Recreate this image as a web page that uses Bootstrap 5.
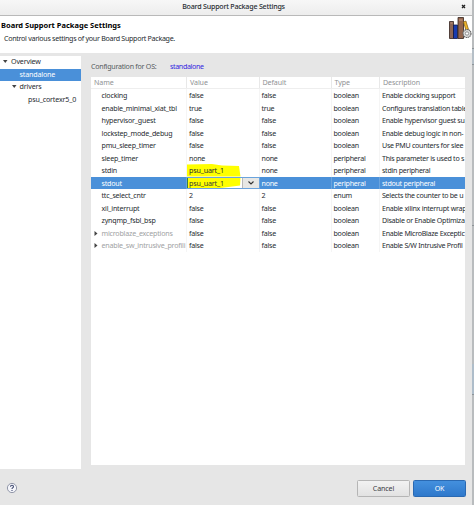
<!DOCTYPE html>
<html lang="en">
<head>
<meta charset="utf-8">
<meta name="viewport" content="width=device-width, initial-scale=1">
<title>Board Support Package Settings</title>
<link href="https://cdn.jsdelivr.net/npm/bootstrap@5.3.0/dist/css/bootstrap.min.css" rel="stylesheet">
<style>
body{width:474px;height:505px;background:linear-gradient(#b9bcbe 0 48px,#8e9498 48px 49px,#b5bfc7 49px 64px,#8e9498 64px 65px,#b9bcbe 65px 225px,#8e9498 225px 226px,#b9bcbe 226px 364px,#aebdca 364px 394px,#8e9498 394px 395px,#b9bcbe 395px);font:7.1px/13px "Noto Sans","Open Sans",sans-serif;color:#262b30;letter-spacing:-.25px}
.dialog-window{width:472px;height:505px;background:#e6e6e6}
.title-strip{height:15.5px;background:linear-gradient(#f7f7f7,#ededed);border-bottom:1px solid #b9b9b9;font-size:7.1px;font-weight:500;line-height:13px;letter-spacing:-.21px}
.title-text{padding-right:5px}
.close-icon{right:6px;top:4px}
.intro{height:37.5px;background:#fff}
.intro h1{font:700 7.5px/10px "Noto Sans",sans-serif;color:#000;padding:4px 0 0 1px;letter-spacing:0}
.intro p{padding:3px 0 0 4px;line-height:10px;letter-spacing:-.29px}
.book-icon{right:0;top:0}
.content-area{height:416px;padding-top:3px}
.sidebar-tree{width:81px;height:413px;background:#fff}
.tree-row{height:12.5px;line-height:11px;white-space:nowrap;letter-spacing:-.15px}
.tree-row svg{margin-right:3px}
.lvl-1{padding-left:3px}.lvl-2{padding-left:11.5px}.leaf-1{padding-left:19.5px}.leaf-2{padding-left:28px}
.picked,.set-row.picked{background:#4a90d9;color:#fff}
.main-pane{margin-left:10px;width:374px}
.os-line{height:21px;line-height:21.5px;color:#555b60}
.os-line a{color:#3326e0;text-decoration:none;margin-left:13.5px;letter-spacing:-.35px}
.settings-box{height:387.5px;background:#fff;overflow:hidden}
.set-row{display:grid;grid-template-columns:96px 72.5px 72px 48.5px 85px;height:12.5px;white-space:nowrap}
.set-row>div{overflow:hidden;border-right:1px solid #f5f5f5;padding-left:2px}
.set-row>div:first-child{padding-left:10.5px;letter-spacing:-.2px}
.set-row>div:last-child{border-right:0;letter-spacing:-.28px}
.set-row.heads{color:#8f9294;height:12px;border-bottom:1px solid #eee;line-height:11px;letter-spacing:-.1px}
.set-row.heads>div{padding-left:3px;border-color:#e8e8e8}
.set-row.heads>div:first-child,.set-row.heads>div:last-child{letter-spacing:-.1px}
.set-row.heads>div:first-child{padding-left:3px}
.set-row.picked>div{border-color:#6aa3dd}
.set-row.muted>div:first-child{color:#a0a2a3;padding-left:3px}
.muted svg{margin-right:3.5px;vertical-align:0}
.marker{background:#ff0;width:53.5px;height:12.5px;display:block;margin-left:-2px;padding-left:2px;letter-spacing:-.15px}
.top-mark{clip-path:polygon(0 .5px,25px 0,35px 1.5px,52px 2px,53.5px 12.5px,0 12.5px)}
.set-row .editor{padding:0;background:#fff;color:#30353a;display:flex;border:1px solid #4a90d9;border-left:0;line-height:11.5px}
.editor .marker{margin:0;height:11px;border-left:1px solid #388044;padding-left:1px;clip-path:polygon(0 0,53.5px 0,53px 8px,30px 11px,0 11px)}
.combo-btn{width:17px;margin-left:auto;background:#e7e7e4;border-left:1px solid #b8b8b8}
.bottom-bar{height:36px;padding:0 6px}
.dlg-btn{width:53px;height:17px;padding:0;font-size:7.1px;line-height:15px;letter-spacing:-.1px;border-radius:1.5px;border:1px solid #b5b5b5;background:linear-gradient(#f2f2f2,#e2e2e2);color:#3b4045}
.dlg-btn.ok{background:linear-gradient(#4490de,#2e78cb);border-color:#2a69b2;color:#fff}
.bottom-btns{gap:3px;margin-top:11px}
.help-icon{margin-top:13px}
</style>
<script src="https://cdn.jsdelivr.net/npm/bootstrap@5.3.0/dist/js/bootstrap.bundle.min.js"></script>
</head>
<body class="overflow-hidden m-0">
<main class="dialog-window d-flex flex-column">
<header class="title-strip position-relative text-center flex-shrink-0"><span class="title-text">Board Support Package Settings</span>
<svg class="close-icon position-absolute" width="5" height="5" viewBox="0 0 5 5"><path d="M1 1 4 4M4 1 1 4" stroke="#222" stroke-width="1.3"/></svg></header>
<section class="intro position-relative flex-shrink-0">
<h1 class="m-0">Board Support Package Settings</h1><p class="m-0">Control various settings of your Board Support Package.</p>
<svg class="book-icon position-absolute" width="24" height="24" viewBox="0 0 24 24"><g stroke="#33231e" stroke-width=".8"><path d="M1.5 5.5h4v17h-4z" fill="#8b6555"/><path d="M5.5 9h4v13.5h-4z" fill="#173bb0" stroke="#101746"/><path d="M10 1.5h5.5v21H10z" fill="#94664e"/><path d="m15.500 6 2.400-1 4 13-2.500 1z" fill="#f0b62c" stroke="#8b641b"/></g><path d="M2.500 7h2M11 4h3.500" stroke="#c49a82"/><circle cx="19" cy="17.500" r="4" fill="#ddd" stroke="#686868" stroke-width="1.200" stroke-dasharray="1.500 .5"/><circle cx="19" cy="17.500" r="1.700" fill="#fff" stroke="#777" stroke-width=".8"/></svg>
</section>
<div class="content-area d-flex flex-shrink-0">
<nav class="sidebar-tree flex-shrink-0">
<div class="tree-row lvl-1"><svg width="5" height="4" viewBox="0 0 5 4"><path d="M0 0h4.500L2.250 3z" fill="#444"/></svg>Overview</div>
<div class="tree-row leaf-1 picked">standalone</div>
<div class="tree-row lvl-2"><svg width="5" height="4" viewBox="0 0 5 4"><path d="M0 0h4.500L2.250 3z" fill="#444"/></svg>drivers</div>
<div class="tree-row leaf-2">psu_cortexr5_0</div>
</nav>
<section class="main-pane">
<div class="os-line">Configuration for OS:<a href="#">standalone</a></div>
<div class="settings-box">
<div class="set-row heads"><div>Name</div><div>Value</div><div>Default</div><div>Type</div><div>Description</div></div>
<div class="set-row"><div>clocking</div><div>false</div><div>false</div><div>boolean</div><div>Enable clocking support</div></div>
<div class="set-row"><div>enable_minimal_xlat_tbl</div><div>true</div><div>true</div><div>boolean</div><div>Configures translation table</div></div>
<div class="set-row"><div>hypervisor_guest</div><div>false</div><div>false</div><div>boolean</div><div>Enable hypervisor guest su</div></div>
<div class="set-row"><div>lockstep_mode_debug</div><div>false</div><div>false</div><div>boolean</div><div>Enable debug logic in non-</div></div>
<div class="set-row"><div>pmu_sleep_timer</div><div>false</div><div>false</div><div>boolean</div><div>Use PMU counters for slee</div></div>
<div class="set-row"><div>sleep_timer</div><div>none</div><div>none</div><div>peripheral</div><div>This parameter is used to s</div></div>
<div class="set-row"><div>stdin</div><div><span class="marker top-mark">psu_uart_1</span></div><div>none</div><div>peripheral</div><div>stdin peripheral</div></div>
<div class="set-row picked"><div>stdout</div><div class="editor"><span class="marker">psu_uart_1</span><span class="combo-btn d-flex align-items-center justify-content-center"><svg width="6" height="4" viewBox="0 0 6 4"><path d="m.5.5 2.500 2.500L5.500.5" fill="none" stroke="#333" stroke-width="1.100"/></svg></span></div><div>none</div><div>peripheral</div><div>stdout peripheral</div></div>
<div class="set-row"><div>ttc_select_cntr</div><div>2</div><div>2</div><div>enum</div><div>Selects the counter to be u</div></div>
<div class="set-row"><div>xil_interrupt</div><div>false</div><div>false</div><div>boolean</div><div>Enable xilinx interrupt wrap</div></div>
<div class="set-row"><div>zynqmp_fsbl_bsp</div><div>false</div><div>false</div><div>boolean</div><div>Disable or Enable Optimiza</div></div>
<div class="set-row muted"><div><svg width="4" height="5" viewBox="0 0 4 5"><path d="M.5 0v5l3-2.500z" fill="#444"/></svg>microblaze_exceptions</div><div>false</div><div>false</div><div>boolean</div><div>Enable MicroBlaze Exceptic</div></div>
<div class="set-row muted"><div><svg width="4" height="5" viewBox="0 0 4 5"><path d="M.5 0v5l3-2.500z" fill="#444"/></svg>enable_sw_intrusive_profili</div><div>false</div><div>false</div><div>boolean</div><div>Enable S/W Intrusive Profil</div></div>
</div></section></div>
<footer class="bottom-bar d-flex justify-content-between align-items-start">
<svg class="help-icon" width="12" height="12" viewBox="0 0 12 12"><circle cx="6" cy="6" r="4.600" fill="#f5f6fb" stroke="#7b8297" stroke-width=".8"/><path d="M4.500 4.700c0-2 3-2 3 0C7.500 5.700 6 5.700 6 7M6 8v1" fill="none" stroke="#424c72" stroke-width="1.100"/></svg>
<div class="bottom-btns d-flex"><button class="btn dlg-btn">Cancel</button><button class="btn dlg-btn ok">OK</button></div>
</footer>
</main>
</body>
</html>
